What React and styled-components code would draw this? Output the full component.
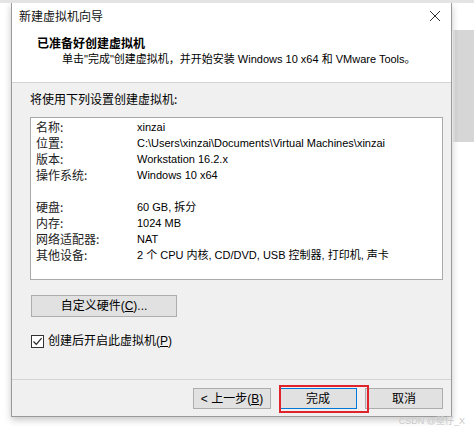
import React from "react";
import styled, { createGlobalStyle } from "styled-components";

const GlobalStyle = createGlobalStyle`
  html, body {
    margin: 0;
    padding: 0;
    background: #ffffff;
  }
  * {
    box-sizing: border-box;
  }
`;

const cjk = `"Noto Sans CJK SC", sans-serif`;
const ui = `"Liberation Sans", "Noto Sans CJK SC", sans-serif`;

const Page = styled.div`
  position: relative;
  width: 474px;
  height: 427px;
  overflow: hidden;
  border-top: 3px solid #e4e4e4;
  background: #ffffff;
`;

// window sitting behind the dialog, on the right
const BackWindow = styled.div`
  position: absolute;
  left: 453px;
  top: 27px;
  width: 21px;
  height: 112px;
  background: #d6d6d6;
  border-left: 2px solid #e8e8e8;
`;

const Dialog = styled.div`
  position: relative;
  margin-left: 11px;
  width: 441px;
  height: 414px;
  display: flex;
  flex-direction: column;
  background: #ffffff;
  border: 1px solid #9a9a9a;
  border-top: none;
  box-shadow: 0 3px 7px rgba(0, 0, 0, 0.22);
`;

const TitleBar = styled.div`
  height: 26px;
  display: flex;
  align-items: center;
  justify-content: space-between;
  padding: 0 10px 0 7px;
`;

const Title = styled.span`
  font-family: ${cjk};
  font-size: 12px;
  line-height: 16px;
  color: #111;
`;

const Header = styled.div`
  padding: 6px 0 15px 25px;
  border-bottom: 1px solid #d4d4d4;
`;

const HeaderTitle = styled.div`
  font-family: ${cjk};
  font-size: 12px;
  font-weight: 700;
  line-height: 16px;
  color: #000;
`;

const HeaderSub = styled.div`
  padding-left: 25px;
  font-family: ${ui};
  font-size: 11px;
  line-height: 16px;
  color: #000;
  white-space: nowrap;
`;

const Body = styled.div`
  height: 296px;
  display: flex;
  flex-direction: column;
  align-items: flex-start;
  padding: 8px 9px 0 18px;
  background: #f0f0f0;
`;

const Intro = styled.div`
  font-family: ${cjk};
  font-size: 12px;
  line-height: 16px;
  color: #000;
`;

const SummaryBox = styled.div`
  margin-top: 10px;
  width: 413px;
  padding: 1px 0 16px 5px;
  background: #ffffff;
  border: 1px solid #a9a9a9;
  display: grid;
  grid-template-columns: 101px 1fr;
  grid-auto-rows: 16px;
`;

const Label = styled.div`
  font-family: ${cjk};
  font-size: 12px;
  line-height: 16px;
  color: #222;
`;

const Value = styled.div`
  font-family: ${ui};
  font-size: 11px;
  line-height: 16px;
  color: #000;
  white-space: nowrap;
`;

const Button = styled.button`
  width: ${(p) => p.$width || 78}px;
  height: ${(p) => p.$height || 21}px;
  padding: 0;
  margin: 0;
  background: #e1e1e1;
  border: 1px solid ${(p) => (p.$default ? "#0078d7" : "#adadad")};
  font-family: ${ui};
  font-size: 12px;
  line-height: 16px;
  color: #000;
  display: flex;
  align-items: center;
  justify-content: center;
  white-space: pre;
`;

const CustomButton = styled(Button)`
  margin-top: 15px;
  margin-left: 1px;
`;

const Key = styled.span`
  text-decoration: underline;
`;

const CheckRow = styled.label`
  margin-top: 16px;
  margin-left: 1px;
  display: flex;
  align-items: center;
  gap: 4px;
  font-family: ${ui};
  font-size: 12px;
  line-height: 16px;
  color: #000;
`;

const CheckBox = styled.span`
  width: 13px;
  height: 13px;
  background: #ffffff;
  border: 1px solid #333;
  display: flex;
  align-items: center;
  justify-content: center;
`;

const Footer = styled.div`
  flex: 1;
  display: flex;
  justify-content: flex-end;
  align-items: flex-start;
  gap: 8px;
  padding: 8px 8px 0 0;
  border-top: 1px solid #d4d4d4;
  background: #f0f0f0;
`;

// red annotation drawn over the finish button
const Highlight = styled.div`
  position: absolute;
  left: 279px;
  top: 382px;
  width: 90px;
  height: 28px;
  border: 2px solid #e0242b;
`;

const Watermark = styled.div`
  position: absolute;
  right: 9px;
  top: 413px;
  font-family: ${ui};
  font-size: 9px;
  line-height: 10px;
  color: #c9c9c9;
  white-space: nowrap;
`;

const rows = [
  ["名称:", "xinzai"],
  ["位置:", "C:\\Users\\xinzai\\Documents\\Virtual Machines\\xinzai"],
  ["版本:", "Workstation 16.2.x"],
  ["操作系统:", "Windows 10 x64"],
  ["", ""],
  ["硬盘:", "60 GB, 拆分"],
  ["内存:", "1024 MB"],
  ["网络适配器:", "NAT"],
  ["其他设备:", "2 个 CPU 内核, CD/DVD, USB 控制器, 打印机, 声卡"],
];

const CloseIcon = () => (
  <svg width="12" height="12" viewBox="0 0 12 12">
    <path d="M1 1L11 11M11 1L1 11" stroke="#333" strokeWidth="1" fill="none" />
  </svg>
);

const CheckMark = () => (
  <svg width="11" height="11" viewBox="0 0 11 11">
    <path d="M1.5 5.5L4.3 8.3L9.6 2.2" stroke="#222" strokeWidth="1.2" fill="none" />
  </svg>
);

export default function App() {
  return (
    <>
      <GlobalStyle />
      <Page>
        <BackWindow />
        <Dialog>
          <TitleBar>
            <Title>新建虚拟机向导</Title>
            <CloseIcon />
          </TitleBar>
          <Header>
            <HeaderTitle>已准备好创建虚拟机</HeaderTitle>
            <HeaderSub>
              单击"完成"创建虚拟机，并开始安装 Windows 10 x64 和 VMware Tools。
            </HeaderSub>
          </Header>
          <Body>
            <Intro>将使用下列设置创建虚拟机:</Intro>
            <SummaryBox>
              {rows.map(([label, value], i) => (
                <React.Fragment key={i}>
                  <Label>{label}</Label>
                  <Value>{value}</Value>
                </React.Fragment>
              ))}
            </SummaryBox>
            <CustomButton $width={146} $height={22}>
              <span>
                自定义硬件(<Key>C</Key>)...
              </span>
            </CustomButton>
            <CheckRow>
              <CheckBox>
                <CheckMark />
              </CheckBox>
              <span>
                创建后开启此虚拟机(<Key>P</Key>)
              </span>
            </CheckRow>
          </Body>
          <Footer>
            <Button>
              <span>
                &lt; 上一步(<Key>B</Key>)
              </span>
            </Button>
            <Button $default>完成</Button>
            <Button>取消</Button>
          </Footer>
        </Dialog>
        <Highlight />
        <Watermark>CSDN @壁仔_X</Watermark>
      </Page>
    </>
  );
}
